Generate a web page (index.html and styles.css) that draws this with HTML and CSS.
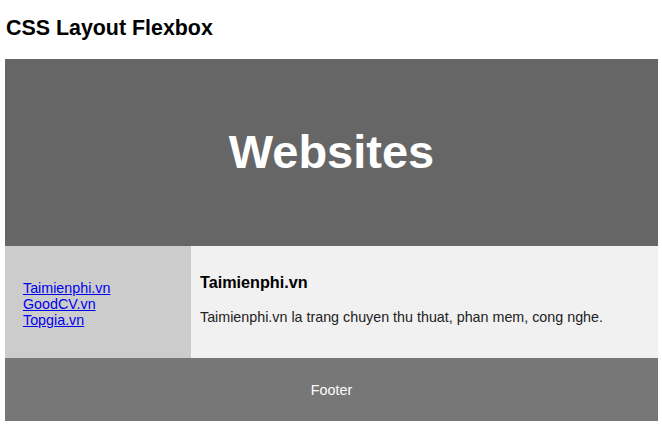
FILE: index.html
```html
<!DOCTYPE html>
<html lang="vi">
<head>
    <meta charset="UTF-8">
    <meta name="viewport" content="width=device-width, initial-scale=1.0">
    <title>CSS Layout Flexbox</title>
    <link rel="stylesheet" href="styles.css">
</head>
<body>
    <h1 class="title">CSS Layout Flexbox</h1>

    <header class="header">
        <h2>Websites</h2>
    </header>

    <section class="content">
        <nav class="sidebar">
            <ul>
                <li><a href="#">Taimienphi.vn</a></li>
                <li><a href="#">GoodCV.vn</a></li>
                <li><a href="#">Topgia.vn</a></li>
            </ul>
        </nav>
        <article class="main">
            <h3>Taimienphi.vn</h3>
            <p>Taimienphi.vn la trang chuyen thu thuat, phan mem, cong nghe.</p>
        </article>
    </section>

    <footer class="footer">
        <p>Footer</p>
    </footer>
</body>
</html>
```

FILE: styles.css
```css
* {
    box-sizing: border-box;
}

body {
    font-family: "Liberation Sans", Arial, sans-serif;
    font-size: 14.3px;
    margin: 0 4px 0 5px;
    color: #222;
}

.title {
    font-size: 21.4px;
    margin: 0;
    padding: 16px 1px 19px;
    line-height: 24px;
    color: #000;
}

.header {
    background-color: #666;
    color: #fff;
    text-align: center;
    padding: 66px 0 67px;
}

.header h2 {
    margin: 0;
    font-size: 47px;
    line-height: 54px;
}

.content {
    display: flex;
}

.sidebar {
    width: 186px;
    background-color: #ccc;
    padding: 34px 18px 28px;
}

.sidebar ul {
    list-style: none;
    margin: 0;
    padding: 0;
}

.sidebar li {
    line-height: 16px;
}

.sidebar a {
    color: #0000ee;
}

.main {
    flex: 1;
    background-color: #f1f1f1;
    padding: 0 9px;
}

.main h3 {
    font-size: 16.2px;
    line-height: 18px;
    margin: 27px 0 18px;
    color: #000;
}

.main p {
    margin: 0 0 33px;
    line-height: 16px;
}

.footer {
    background-color: #777;
    color: #fff;
    text-align: center;
    padding: 24px 0 23px;
}

.footer p {
    margin: 0;
    line-height: 16px;
}
```
